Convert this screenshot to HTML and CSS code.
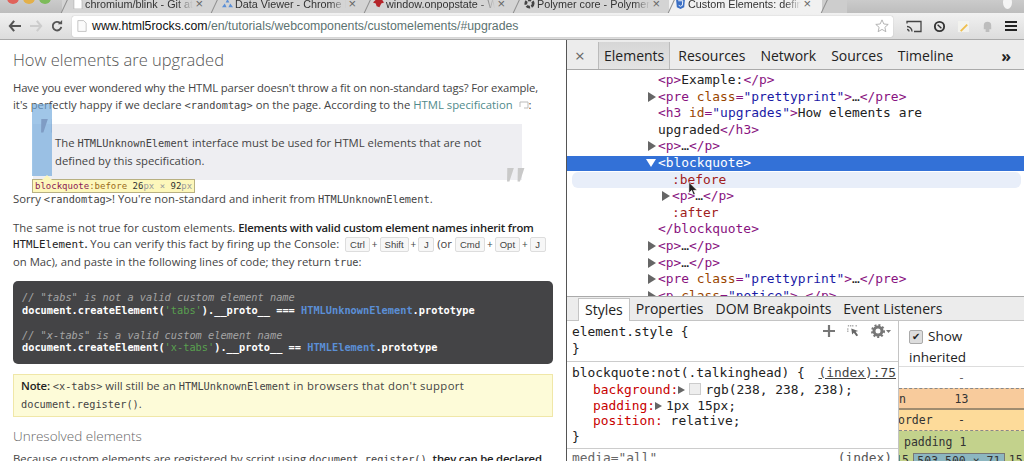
FILE: index.html
```html
<!DOCTYPE html>
<html lang="en">
<head>
    <meta charset="UTF-8">
    <title>Custom Elements: defining new elements in HTML</title>
    <link rel="stylesheet" href="styles.css">
</head>
<body>
    <div class="tabstrip">
        <div class="lights"><i class="light red"></i><i class="light amber"></i><i class="light green"></i></div>
        <div class="tab tab-1"><svg class="fav" viewBox="0 0 12 12"><path d="M2 0h6l3 3v9H2z" fill="#fff" stroke="#bbb"/></svg><span class="tab-title">chromium/blink - Git at Google</span><span class="tab-x">×</span></div>
        <div class="tab tab-2"><svg class="fav" viewBox="0 0 12 12"><path d="M6 1l2 4H4zM3 6l2 4H0zM9 6l3 4H7z" fill="#5b8fd6"/></svg><span class="tab-title">Data Viewer - Chrome Features</span><span class="tab-x">×</span></div>
        <div class="tab tab-3"><svg class="fav" viewBox="0 0 12 12"><path d="M0 5l4-4 6 1 2 3-3 1-2 4-3-1-1-3z" fill="#b5252a"/></svg><span class="tab-title">window.onpopstate - Web API</span><span class="tab-x">×</span></div>
        <div class="tab tab-4"><svg class="fav" viewBox="0 0 12 12"><circle cx="6" cy="6" r="4" fill="none" stroke="#444" stroke-width="3" stroke-dasharray="4 1.5"/></svg><span class="tab-title">Polymer core - Polymer</span><span class="tab-x">×</span></div>
        <div class="tab tab-5 tab-active"><svg class="fav" viewBox="0 0 12 12"><path d="M1 0h10l-1 10-4 2-4-2z" fill="#3b6fc4"/><path d="M3.500 3h5L8 8 6 9 4 8" fill="none" stroke="#fff"/></svg><span class="tab-title">Custom Elements: defining new</span><span class="tab-x">×</span></div>
        <div class="tab tab-new"></div>
        <i class="avatar"></i>
    </div>

    <div class="toolbar">
        <svg class="nav-icon" viewBox="0 0 16 14"><path d="M7 1L2 7l5 6M2 7h13" fill="none" stroke="#555" stroke-width="2.400"/></svg>
        <svg class="nav-icon" viewBox="0 0 16 14"><path d="M9 1l5 6-5 6M14 7H1" fill="none" stroke="#ccc" stroke-width="2.400"/></svg>
        <svg class="nav-icon" viewBox="0 0 16 14"><path d="M13 8a5 5 0 1 1-1.500-4.500" fill="none" stroke="#555" stroke-width="2.200"/><path d="M9 5h5V0z" fill="#555"/></svg>
        <div class="omnibox">
            <svg class="page-icon" viewBox="0 0 12 14"><path d="M1 .5h7l3 3v10H1z" fill="#fbfbfb" stroke="#bbb"/></svg>
            <span class="url"><b>www.html5rocks.com</b>/en/tutorials/webcomponents/customelements/#upgrades</span>
            <svg class="star" viewBox="0 0 16 16"><path d="M8 1l2.100 4.700 5 .5-3.800 3.300 1.100 5L8 11.900 3.600 14.500l1.100-5L.900 6.200l5-.5z" fill="#fff" stroke="#aaa"/></svg>
        </div>
        <div class="extensions">
            <svg class="ext cast" viewBox="0 0 16 12"><path d="M1 3V1h14v10H8M1 6a5 5 0 0 1 5 5M1 9a2 2 0 0 1 2 2" fill="none" stroke="#444" stroke-width="1.300"/></svg>
            <svg class="ext" viewBox="0 0 14 14"><circle cx="7" cy="7" r="5" fill="none" stroke="#333" stroke-width="2"/><path d="M5 5l4 4" stroke="#333" stroke-width="1.500"/></svg>
            <svg class="ext" viewBox="0 0 14 14"><rect x="1" y="1" width="12" height="12" fill="#f2f2ee"/><path d="M4 12l7-7" stroke="#f0bf4c" stroke-width="2"/></svg>
            <svg class="ext" viewBox="0 0 14 14"><path d="M3 6a4 4 0 0 1 8 0v4H9v3H5v-3H3z" fill="#bdbdbd"/></svg>
            <div class="menu-icon"><i></i><i></i><i></i></div>
        </div>
    </div>

    <div class="window">
        <main class="article">
            <h2 class="heading">How elements are upgraded</h2>
            <p class="para para-intro">Have you ever wondered why the HTML parser doesn't throw a fit on non-standard tags? For example, it's perfectly happy if we declare <code>&lt;randomtag&gt;</code> on the page. According to the <a class="link">HTML specification</a> <svg class="ext-link" viewBox="0 0 10 8"><path d="M1 6V1h8v6H5" fill="none" stroke="#bbb"/></svg>:</p>
            <blockquote class="quote">
                <span class="quote-close">"</span>
                <p>The <code>HTMLUnknownElement</code> interface must be used for HTML elements that are not defined by this specification.</p>
            </blockquote>
            <p class="para para-sorry">Sorry <code>&lt;randomtag&gt;</code>! You're non-standard and inherit from <code>HTMLUnknownElement</code>.</p>
            <p class="para para-same">The same is not true for custom elements. <strong>Elements with valid custom element names inherit from <code>HTMLElement</code>.</strong> You can verify this fact by firing up the Console: <kbd class="kbd-first">Ctrl</kbd><span class="plus">+</span><kbd>Shift</kbd><span class="plus">+</span><kbd>J</kbd> (or <kbd>Cmd</kbd><span class="plus">+</span><kbd>Opt</kbd><span class="plus">+</span><kbd>J</kbd> on Mac), and paste in the following lines of code; they return <code>true</code>:</p>
            <pre class="code-block"><em>// "tabs" is not a valid custom element name</em>
<b>document.createElement(<span class="str">'tabs'</span>).__proto__ === <span class="typ">HTMLUnknownElement</span>.prototype</b>

<em>// "x-tabs" is a valid custom element name</em>
<b>document.createElement(<span class="str">'x-tabs'</span>).__proto__ == <span class="typ">HTMLElement</span>.prototype</b></pre>
            <p class="note"><strong>Note:</strong> <code>&lt;x-tabs&gt;</code> will still be an <code>HTMLUnknownElement</code> <span class="note-tail">in browsers that don't support</span> <code>document.register()</code>.</p>
            <h3 class="subheading">Unresolved elements</h3>
            <p class="para para-last">Because custom elements are registered by script using <code>document.register()</code>, <strong>they can be declared</strong></p>

            <div class="highlight"><span class="hl-quote">"</span></div>
            <div class="hl-tip"><span class="tip-sel">blockquote</span><span class="tip-pseudo">:before</span> <b>26</b><span class="tip-unit">px</span> <span class="tip-unit">×</span> <b>92</b><span class="tip-unit">px</span></div>
        </main>

        <aside class="devtools">
            <nav class="dt-tabs">
                <span class="dt-close">×</span>
                <span class="dt-tab dt-tab-active">Elements</span>
                <span class="dt-tab">Resources</span>
                <span class="dt-tab">Network</span>
                <span class="dt-tab">Sources</span>
                <span class="dt-tab">Timeline</span>
                <span class="dt-more">»</span>
            </nav>
            <div class="dom-tree">
                <div class="node lvl-2"><span class="tag">&lt;p&gt;</span>Example:<span class="tag">&lt;/p&gt;</span></div>
                <div class="node lvl-2 has-arrow"><span class="tag">&lt;pre</span> <span class="attr">class</span><span class="tag">=</span><span class="val">"prettyprint"</span><span class="tag">&gt;</span>…<span class="tag">&lt;/pre&gt;</span></div>
                <div class="node lvl-2"><span class="tag">&lt;h3</span> <span class="attr">id</span><span class="tag">=</span><span class="val">"upgrades"</span><span class="tag">&gt;</span>How elements are upgraded<span class="tag">&lt;/h3&gt;</span></div>
                <div class="node lvl-2 has-arrow"><span class="tag">&lt;p&gt;</span>…<span class="tag">&lt;/p&gt;</span></div>
                <div class="node lvl-2 has-arrow open selected">&lt;blockquote&gt;</div>
                <div class="node lvl-3 hovered"><span class="pseudo">:before</span></div>
                <div class="node lvl-3 has-arrow"><span class="tag">&lt;p&gt;</span>…<span class="tag">&lt;/p&gt;</span></div>
                <div class="node lvl-3"><span class="pseudo">:after</span></div>
                <div class="node lvl-2"><span class="tag">&lt;/blockquote&gt;</span></div>
                <div class="node lvl-2 has-arrow"><span class="tag">&lt;p&gt;</span>…<span class="tag">&lt;/p&gt;</span></div>
                <div class="node lvl-2 has-arrow"><span class="tag">&lt;p&gt;</span>…<span class="tag">&lt;/p&gt;</span></div>
                <div class="node lvl-2 has-arrow"><span class="tag">&lt;pre</span> <span class="attr">class</span><span class="tag">=</span><span class="val">"prettyprint"</span><span class="tag">&gt;</span>…<span class="tag">&lt;/pre&gt;</span></div>
                <div class="node lvl-2 has-arrow"><span class="tag">&lt;p</span> <span class="attr">class</span><span class="tag">=</span><span class="val">"notice"</span><span class="tag">&gt;</span>…<span class="tag">&lt;/p&gt;</span></div>
            </div>
            <svg class="cursor" viewBox="0 0 10 15"><path d="M1 0v12l3-3 2 5 2-1-2-4h4z" fill="#222" stroke="#fff" stroke-width=".6"/></svg>
            <nav class="side-tabs">
                <span class="side-tab side-tab-active">Styles</span>
                <span class="side-tab">Properties</span>
                <span class="side-tab">DOM Breakpoints</span>
                <span class="side-tab">Event Listeners</span>
            </nav>
            <div class="side-body">
                <div class="styles">
                    <section class="rule rule-el">
                        <div class="rule-tools">
                            <svg class="tool" viewBox="0 0 12 12"><path d="M6 0v12M0 6h12" stroke="#777" stroke-width="2.200"/></svg>
                            <svg class="tool" viewBox="0 0 14 14"><path d="M1 1h7M1 4v5M10 1h2" stroke="#666" stroke-dasharray="1.500 1"/><path d="M5 4l8 3-3 1 3 4-2 1-3-4-2 2z" fill="#666"/></svg>
                            <svg class="tool tool-gear" viewBox="0 0 20 14"><circle cx="7" cy="7" r="4" fill="none" stroke="#777" stroke-width="3"/><circle cx="7" cy="7" r="6" fill="none" stroke="#777" stroke-width="2" stroke-dasharray="2 2"/><path d="M15 6h5l-2.500 3z" fill="#777"/></svg>
                        </div>
                        <div>element.style {</div>
                        <div>}</div>
                    </section>
                    <section class="rule rule-quote">
                        <div class="rule-head"><span>blockquote:not(.talkinghead) {</span><a class="rule-src">(index):75</a></div>
                        <div class="decl"><span class="prop">background:</span><i class="tri"></i><i class="swatch"></i>rgb(238, 238, 238);</div>
                        <div class="decl"><span class="prop">padding:</span><i class="tri"></i>1px 15px;</div>
                        <div class="decl"><span class="prop">position:</span> relative;</div>
                        <div class="decl-end">}</div>
                    </section>
                    <section class="rule rule-media">
                        <div class="rule-head"><span>media="all"</span><a class="rule-src-plain">(index)</a></div>
                    </section>
                </div>
                <div class="metrics">
                    <div class="inherit-box">
                        <label class="show-inherited"><i class="check">✔</i>Show</label>
                        <div>inherited</div>
                    </div>
                    <div class="box-row box-position">-</div>
                    <div class="box-row box-margin"><span class="box-label">n</span><span>13</span></div>
                    <div class="box-row box-border"><span class="box-label">order</span><span>-</span></div>
                    <div class="box-row box-padding"><span class="box-label">padding</span><span class="box-one">1</span></div>
                    <div class="box-row box-inner"><span>15</span><span class="box-content">503.500 × 71</span><span>15</span></div>
                </div>
            </div>
        </aside>
    </div>
</body>
</html>
```

FILE: styles.css
```css
/* base */
html, body {
    margin: 0;
    height: 461px;
    overflow: hidden;
}
body {
    font-family: "Open Sans", Arial, sans-serif;
    color: #444;
    background: #fff;
    display: flex;
    flex-direction: column;
}
code {
    font-family: "DejaVu Sans Mono", monospace;
    font-size: 10.300px;
}

/* browser chrome */
.tabstrip {
    height: 13px;
    flex: none;
    display: flex;
    align-items: flex-start;
    background: linear-gradient(#cbcbcb, #bdbdbd);
    overflow: hidden;
    position: relative;
}
.lights {
    width: 62px;
    flex: none;
    display: flex;
    gap: 4px;
    padding-left: 7px;
    box-sizing: border-box;
    margin-top: -8px;
}
.light {
    width: 12px;
    height: 12px;
    border-radius: 50%;
}
.red { background: #e0625a; }
.amber { background: #e3b04a; }
.green { background: #7dbb5a; }
.tab {
    height: 19px;
    flex: none;
    display: flex;
    align-items: center;
    gap: 2px;
    padding: 0 9px 0 10px;
    box-sizing: border-box;
    margin-top: -6px;
    background: #d4d4d4;
    font-family: "Liberation Sans", Arial, sans-serif;
    font-size: 10.800px;
    color: #333;
    position: relative;
}
.tab::before {
    content: "";
    position: absolute;
    left: 2px;
    top: 0;
    width: 1px;
    height: 24px;
    background: #8f8f8f;
    transform: rotate(25deg);
}
.tab-1 { width: 150px; }
.tab-2 { width: 153px; }
.tab-3 { width: 149px; padding-left: 8px; }
.tab-4 { width: 155px; }
.tab-5 { width: 153px; padding-left: 6px; padding-right: 11px; }
.tab-new { width: 25px; background: #cdcdcd; }
.tab-active { background: #f1f1f1; }
.fav { width: 11px; height: 11px; flex: none; }
.tab-title {
    flex: 1;
    min-width: 0;
    white-space: nowrap;
    overflow: hidden;
    -webkit-mask-image: linear-gradient(to left, transparent, #000 16px);
    mask-image: linear-gradient(to left, transparent, #000 16px);
}
.tab-x { color: #666; font-size: 13px; }
.avatar {
    position: absolute;
    left: 1003px;
    top: -4px;
    width: 9px;
    height: 13px;
    background: #f4f4f4;
    border-radius: 50%;
}
.toolbar {
    height: 27px;
    flex: none;
    display: flex;
    align-items: center;
    gap: 7px;
    padding: 0 0 0 8px;
    box-sizing: border-box;
    background: linear-gradient(#f1f1f1, #dcdcdc);
    border-bottom: 1px solid #a9a9a9;
}
.nav-icon { width: 14px; height: 12px; flex: none; }
.omnibox {
    flex: 1;
    min-width: 0;
    height: 21px;
    margin-left: 1px;
    display: flex;
    align-items: center;
    gap: 5px;
    padding: 0 4px 0 5px;
    background: #fff;
    border-radius: 2px;
    box-shadow: 0 0 1px #999;
}
.page-icon { width: 10px; height: 12px; flex: none; }
.url {
    flex: 1;
    font-family: "Liberation Sans", Arial, sans-serif;
    font-size: 12.300px;
    color: #5d7371;
    white-space: nowrap;
}
.url b { font-weight: normal; color: #111; }
.star { width: 14px; height: 14px; flex: none; }
.extensions {
    width: 124px;
    flex: none;
    box-sizing: border-box;
    display: flex;
    align-items: center;
    gap: 11px;
    padding-left: 6px;
}
.ext { width: 13px; height: 13px; flex: none; }
.cast { width: 16px; }
.menu-icon {
    width: 12px;
    display: flex;
    flex-direction: column;
    gap: 2px;
}
.menu-icon i { height: 2px; background: #222; }

/* page side */
.window {
    flex: 1;
    min-height: 0;
    display: flex;
}
.article {
    width: 566px;
    flex: none;
    box-sizing: border-box;
    padding: 10px 13px 0;
    position: relative;
    overflow: hidden;
    font-size: 11.300px;
    line-height: 16.500px;
    background: #fff;
}
.heading {
    margin: 0 0 10px;
    font-weight: 300;
    font-size: 16.500px;
    line-height: 20px;
    color: #555;
}
.para { margin: 0; }
.para-intro::first-line { letter-spacing: -.125px; }
.para-same { margin-top: 12px; }
.link { color: #4f8a8b; }
.ext-link { width: 10px; height: 8px; margin-left: 3px; }
strong { color: #222; font-weight: 600; letter-spacing: -.2px; }
strong code { font-size: 10.800px; font-weight: 400; letter-spacing: 0; }
.quote {
    margin: 11px 31px 11px 20px;
    padding: 10px 15px 10px 22px;
    background: #eeeef2;
    position: relative;
    line-height: 18px;
}
.quote p { margin: 0; width: 432px; }
.quote-close {
    position: absolute;
    right: -6px;
    bottom: -35px;
    font-size: 56px;
    line-height: 56px;
    font-weight: 700;
    font-style: italic;
    color: #c9c9c9;
    font-family: "Liberation Serif", serif;
}
kbd {
    display: inline-block;
    font-family: "Liberation Sans", Arial, sans-serif;
    font-size: 9.500px;
    line-height: 13px;
    height: 13px;
    vertical-align: top;
    margin-top: 1px;
    padding: 0 4px;
    min-width: 6px;
    text-align: center;
    color: #444;
    background: #f7f7f7;
    border: 1px solid #ddd;
    border-radius: 2px;
    font-weight: normal;
}
.kbd-first { margin-left: 3px; }
.plus { margin: 0 2px; font-size: 10px; }
.code-block {
    margin: 11px 0 10px;
    padding: 10px 9px;
    background: #444446;
    border-radius: 5px;
    color: #fff;
    font-family: "DejaVu Sans Mono", monospace;
    font-size: 10.300px;
    line-height: 12.500px;
    overflow: hidden;
}
.code-block em { color: #a5a5a5; }
.str { color: #59a14f; font-weight: normal; }
.typ { color: #5b8fd6; }
.note {
    margin: 0 0 10px;
    padding: 2px 7px;
    background: #fdfbd8;
    border: 1px solid #f0e7a8;
    line-height: 17.500px;
}
.note-tail { letter-spacing: .35px; }
.subheading {
    margin: 0 0 6px;
    font-weight: 300;
    font-size: 13.500px;
    line-height: 18px;
    color: #666;
}

/* overlays on the page */
.highlight {
    position: absolute;
    left: 32px;
    top: 64px;
    width: 20px;
    height: 72px;
    background: rgba(111, 168, 220, .66);
    overflow: hidden;
}
.hl-quote {
    position: absolute;
    left: -1px;
    top: 6px;
    font-family: "Liberation Serif", serif;
    font-size: 56px;
    line-height: 56px;
    font-weight: 700;
    font-style: italic;
    color: #7f9cc4;
}
.hl-tip {
    position: absolute;
    left: 32px;
    top: 139px;
    height: 12px;
    padding: 0 2px;
    background: #fdf7bb;
    border: 1px solid #b8b082;
    font-family: "DejaVu Sans Mono", monospace;
    font-size: 9px;
    line-height: 12px;
    color: #333;
    white-space: nowrap;
}
.hl-tip::before {
    content: "";
    position: absolute;
    left: 9px;
    top: -5px;
    border-left: 5px solid transparent;
    border-right: 5px solid transparent;
    border-bottom: 5px solid #fdf7bb;
}
.hl-tip b { font-weight: normal; }
.tip-sel { color: #8a1a55; }
.tip-pseudo { color: #9a6a1a; }
.tip-unit { color: #999; }

/* devtools */
.devtools {
    flex: 1;
    min-width: 0;
    display: flex;
    flex-direction: column;
    border-left: 1px solid #555;
    position: relative;
    overflow: hidden;
    font-family: "DejaVu Sans Mono", monospace;
    font-size: 12.900px;
    color: #222;
}
.dt-tabs {
    height: 30px;
    flex: none;
    display: flex;
    align-items: center;
    box-sizing: border-box;
    padding-top: 2px;
    background: #ececec;
    border-bottom: 1px solid #aaa;
    font-family: "Open Sans", Arial, sans-serif;
    font-size: 14px;
    color: #222;
}
.dt-close {
    width: 31px;
    padding-left: 8px;
    box-sizing: border-box;
    font-size: 17px;
    color: #666;
    flex: none;
}
.dt-tab {
    height: 100%;
    display: flex;
    align-items: center;
    padding: 0 7px;
    margin-right: 1px;
}
.dt-tab-active {
    margin-right: 1px;
    padding: 0 5px;
    background: linear-gradient(#d6d6d6, #e4e4e4);
    border-left: 1px solid #bbb;
    border-right: 1px solid #bbb;
}
.dt-more { margin-left: auto; padding-right: 13px; font-size: 16px; font-weight: 700; }
.dom-tree {
    flex: 1;
    min-height: 0;
    padding-top: 2px;
    line-height: 16.600px;
    overflow: hidden;
    background: #fff;
}
.node {
    position: relative;
    padding-right: 90px;
}
.lvl-2 { padding-left: 91px; }
.lvl-3 { padding-left: 105px; }
.has-arrow::before {
    content: "";
    position: absolute;
    margin-left: -10px;
    top: 3px;
    border-left: 8px solid #666;
    border-top: 5px solid transparent;
    border-bottom: 5px solid transparent;
}
.open::before {
    margin-left: -12px;
    top: 3px;
    border-left: 5px solid transparent;
    border-right: 5px solid transparent;
    border-top: 8px solid #fff;
    border-bottom: 0;
}
.selected {
    background: #3371d7;
    color: #fff;
    margin: 1px 0;
    line-height: 14.600px;
}
.hovered {
    background: #e8eef9;
    border-radius: 6px;
    margin: 0 3px 0 5px;
    padding-left: 100px;
}
.tag { color: #881280; }
.attr { color: #994500; }
.val { color: #1a1aa6; }
.pseudo { color: #a02020; }
.cursor {
    position: absolute;
    left: 121px;
    top: 142px;
    width: 9px;
    height: 14px;
}
.side-tabs {
    height: 25px;
    flex: none;
    display: flex;
    align-items: flex-end;
    box-sizing: border-box;
    padding-left: 11px;
    background: #ececec;
    border-top: 1px solid #aaa;
    border-bottom: 1px solid #c4c4c4;
    font-family: "Open Sans", Arial, sans-serif;
    font-size: 14px;
    color: #222;
}
.side-tab {
    height: 23px;
    line-height: 21px;
    padding: 0 6px;
    box-sizing: border-box;
    margin-bottom: -1px;
}
.side-tab-active {
    background: #fff;
    border: 1px solid #c4c4c4;
    border-bottom: 0;
}
.side-body {
    height: 140px;
    flex: none;
    display: flex;
    background: #fff;
}
.styles {
    flex: 1;
    min-width: 0;
    border-right: 1px solid #c4c4c4;
    line-height: 15.500px;
}
.rule {
    padding: 3px 2px 4px 5px;
    border-bottom: 1px solid #ccc;
}
.rule-el {
    position: relative;
    padding-top: 2px;
    line-height: 17px;
}
.rule-quote .rule-head { margin-bottom: 1.500px; }
.rule-tools {
    position: absolute;
    right: 7px;
    top: 3px;
    display: flex;
    align-items: center;
    gap: 12px;
}
.tool { width: 12px; height: 12px; }
.tool-gear { width: 20px; height: 14px; }
.rule-head { display: flex; justify-content: space-between; }
.rule-src { text-decoration: underline; color: #444; }
.rule-src-plain { color: #555; padding-right: 4px; }
.decl { padding-left: 21px; }
.prop { color: #c80000; }
.tri {
    display: inline-block;
    border-left: 7px solid #666;
    border-top: 4px solid transparent;
    border-bottom: 4px solid transparent;
    margin-right: 4px;
}
.swatch {
    display: inline-block;
    width: 10px;
    height: 10px;
    margin-right: 4px;
    vertical-align: -1px;
    background: #eee;
    border: 1px solid #ccc;
}
.rule-media { color: #666; border-bottom: 0; padding-top: 1px; }
.metrics {
    width: 125px;
    flex: none;
    overflow: hidden;
    font-family: "Open Sans", Arial, sans-serif;
    font-size: 13.500px;
}
.inherit-box {
    height: 46px;
    box-sizing: border-box;
    padding: 5px 0 0 10px;
    line-height: 21px;
    border-bottom: 1px solid #ddd;
}
.show-inherited { display: flex; align-items: center; gap: 5px; }
.check {
    width: 12px;
    height: 12px;
    display: flex;
    align-items: center;
    justify-content: center;
    font-style: normal;
    font-size: 10px;
    background: #ddd;
    border: 1px solid #aaa;
    border-radius: 2px;
}
.box-row {
    height: 21px;
    box-sizing: border-box;
    display: flex;
    justify-content: center;
    align-items: center;
    position: relative;
    overflow: hidden;
    font-family: "DejaVu Sans Mono", monospace;
    font-size: 11.500px;
    color: #333;
}
.box-position { color: #666; }
.box-margin { height: 22px; background: #f8cb9c; border-top: 1px dashed #888; border-bottom: 2px solid #a08c70; }
.box-border { background: #fddb9a; border-bottom: 1px dashed #888; }
.box-padding { height: 22px; background: #c3d28c; }
.box-one { margin-left: 3px; }
.box-inner { background: #c3d28c; justify-content: flex-start; gap: 4px; margin-left: -4px; align-items: flex-start; }
.box-label { position: absolute; left: 0; }
.box-border .box-label { left: -1px; }
.box-padding .box-label { left: 5px; }
.box-content {
    width: 92px;
    box-sizing: border-box;
    height: 21px;
    text-align: center;
    background: #8cb6c0;
    border: 1px solid #777;
    white-space: nowrap;
}
```
